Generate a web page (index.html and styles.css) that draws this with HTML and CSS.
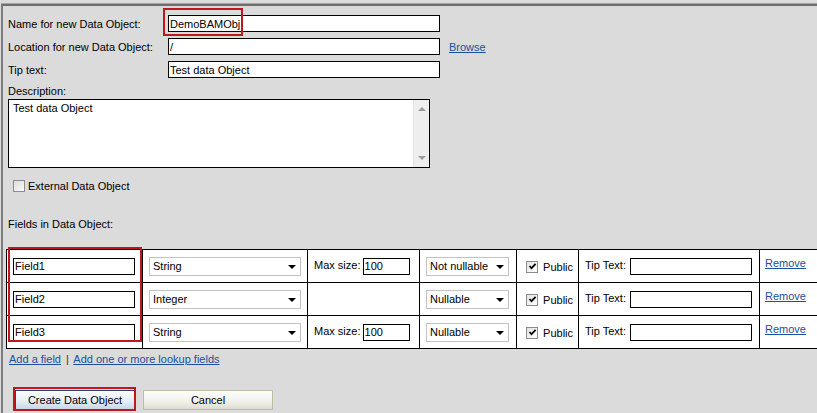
FILE: index.html
```html
<!DOCTYPE html>
<html lang="en">

<head>
  <meta charset="UTF-8">
  <meta name="viewport" content="width=device-width, initial-scale=1.0">
  <title>Create Data Object</title>
  <link rel="stylesheet" href="styles.css">
</head>

<body>
  <div class="panel">

    <!-- Basic properties -->
    <div class="props">
      <label class="label">Name for new Data Object:</label>
      <div class="field">
        <input type="text" class="text-input wide" value="DemoBAMObj">
        <span class="mark mark-name"></span>
      </div>
      <span></span>

      <label class="label">Location for new Data Object:</label>
      <div class="field">
        <input type="text" class="text-input wide" value="/">
      </div>
      <a href="#" class="link browse">Browse</a>

      <label class="label">Tip text:</label>
      <div class="field">
        <input type="text" class="text-input wide" value="Test data Object">
      </div>
      <span></span>
    </div>

    <div class="label desc-label">Description:</div>
    <div class="desc-box">
      <textarea class="desc-text">Test data Object</textarea>
      <div class="vscroll">
        <span class="arrow up"></span>
        <span class="arrow down"></span>
      </div>
    </div>

    <div class="external">
      <span class="check"></span>
      <span class="label">External Data Object</span>
    </div>

    <div class="label fields-label">Fields in Data Object:</div>

    <!-- Field rows -->
    <div class="fields-wrap">
      <table class="fields">
        <colgroup>
          <col class="w-name">
          <col class="w-type">
          <col class="w-size">
          <col class="w-null">
          <col class="w-public">
          <col class="w-tip">
          <col class="w-remove">
        </colgroup>
        <tbody>
          <tr>
            <td><input type="text" class="text-input name-input" value="Field1"></td>
            <td>
              <span class="select type-select"><select><option>String</option><option>Integer</option></select></span>
            </td>
            <td>Max size: <input type="text" class="text-input size-input" value="100"></td>
            <td>
              <span class="select null-select"><select><option>Not nullable</option><option>Nullable</option></select></span>
            </td>
            <td class="public">
              <span class="check checked"><svg width="9" height="9" viewBox="0 0 9 9"><path d="M1.5 4 L3.5 6.2 L7.6 1.8" fill="none" stroke="#000" stroke-width="1.7"/></svg></span>
              <span class="public-text">Public</span>
            </td>
            <td>Tip Text: <input type="text" class="text-input tip-input"></td>
            <td class="remove"><a href="#" class="link">Remove</a></td>
          </tr>
          <tr>
            <td><input type="text" class="text-input name-input" value="Field2"></td>
            <td>
              <span class="select type-select"><select><option>Integer</option><option>String</option></select></span>
            </td>
            <td></td>
            <td>
              <span class="select null-select"><select><option>Nullable</option><option>Not nullable</option></select></span>
            </td>
            <td class="public">
              <span class="check checked"><svg width="9" height="9" viewBox="0 0 9 9"><path d="M1.5 4 L3.5 6.2 L7.6 1.8" fill="none" stroke="#000" stroke-width="1.7"/></svg></span>
              <span class="public-text">Public</span>
            </td>
            <td>Tip Text: <input type="text" class="text-input tip-input"></td>
            <td class="remove"><a href="#" class="link">Remove</a></td>
          </tr>
          <tr>
            <td><input type="text" class="text-input name-input" value="Field3"></td>
            <td>
              <span class="select type-select"><select><option>String</option><option>Integer</option></select></span>
            </td>
            <td>Max size: <input type="text" class="text-input size-input" value="100"></td>
            <td>
              <span class="select null-select"><select><option>Nullable</option><option>Not nullable</option></select></span>
            </td>
            <td class="public">
              <span class="check checked"><svg width="9" height="9" viewBox="0 0 9 9"><path d="M1.5 4 L3.5 6.2 L7.6 1.8" fill="none" stroke="#000" stroke-width="1.7"/></svg></span>
              <span class="public-text">Public</span>
            </td>
            <td>Tip Text: <input type="text" class="text-input tip-input"></td>
            <td class="remove"><a href="#" class="link">Remove</a></td>
          </tr>
        </tbody>
      </table>
      <span class="mark mark-names"></span>
    </div>

    <div class="add-links">
      <a href="#" class="link">Add a field</a>
      <span class="sep">|</span>
      <a href="#" class="link">Add one or more lookup fields</a>
    </div>

    <div class="actions">
      <span class="btn-wrap">
        <button class="btn btn-primary">Create Data Object</button>
        <span class="mark mark-create"></span>
      </span>
      <button class="btn">Cancel</button>
    </div>

  </div>
</body>

</html>
```

FILE: styles.css
```css
/* General Reset */
* {
  margin: 0;
  padding: 0;
  box-sizing: border-box;
}

body {
  font-family: 'Liberation Sans', Arial, sans-serif;
  font-size: 11px;
  color: #000;
  background-color: #dbdbdb;
  padding-top: 4px;
  overflow: hidden;
}

/* Outer panel with the dark top and left edge */
.panel {
  margin-left: 1px;
  height: 420px;
  border-top: 2px solid #6e6e6e;
  border-left: 2px solid #7c7c7c;
  box-shadow: 0 -1px 0 #a4a4a4;
  padding-top: 9px;
}

.label {
  line-height: 14px;
}

.link {
  color: #1c4f9e;
  text-decoration: underline;
}

/* Red call-out boxes */
.mark {
  position: absolute;
  border: 2px solid #c0161e;
  pointer-events: none;
}

/* Text inputs */
.text-input {
  height: 17px;
  border: 1px solid #000;
  background-color: #fff;
  font-family: inherit;
  font-size: 11px;
  padding: 0 1px;
  vertical-align: middle;
}

/* Basic properties grid */
.props {
  display: grid;
  grid-template-columns: 160px 272px auto;
  row-gap: 6px;
  align-items: center;
  margin-left: 5px;
}

.field {
  position: relative;
  height: 17px;
}

.wide {
  width: 272px;
  display: block;
}

.mark-name {
  left: -5px;
  top: -7px;
  width: 80px;
  height: 28px;
}

.browse {
  margin-left: 9px;
}

/* Description */
.desc-label {
  margin: 6px 0 1px 5px;
}

.desc-box {
  display: flex;
  width: 422px;
  height: 69px;
  margin-left: 5px;
  border: 1px solid #000;
  background-color: #fff;
}

.desc-text {
  flex: 1;
  border: none;
  resize: none;
  outline: none;
  font-family: inherit;
  font-size: 11px;
  padding: 2px 4px;
}

.vscroll {
  width: 16px;
  background-color: #eeeeee;
  border-left: 1px solid #e2e2e2;
  display: flex;
  flex-direction: column;
  justify-content: space-between;
  align-items: center;
  padding: 7px 0 7px;
}

.arrow {
  width: 0;
  height: 0;
  border-left: 4px solid transparent;
  border-right: 4px solid transparent;
}

.arrow.up {
  border-bottom: 4px solid #9c9c9c;
}

.arrow.down {
  border-top: 4px solid #9c9c9c;
}

/* Checkboxes */
.check {
  display: inline-flex;
  align-items: center;
  justify-content: center;
  width: 12px;
  height: 12px;
  border: 1px solid #8c8c8c;
  background: linear-gradient(135deg, #dcdcdc, #fbfbfb);
  vertical-align: middle;
}

.checked {
  background: linear-gradient(135deg, #e4e4e4, #ffffff);
}

.external {
  display: flex;
  align-items: center;
  gap: 3px;
  margin: 11px 0 0 10px;
}

.fields-label {
  margin: 24px 0 0 5px;
}

/* Field table */
.fields-wrap {
  position: relative;
  margin: 18px 0 0 3px;
}

.fields {
  border-collapse: collapse;
  table-layout: fixed;
  width: 812px;
  background-color: #fff;
}

.fields td {
  border: 1px solid #000;
  height: 33px;
  padding: 0 6px;
  white-space: nowrap;
  vertical-align: middle;
}

.w-name { width: 136px; }
.w-type { width: 165px; }
.w-size { width: 112px; }
.w-null { width: 97px; }
.w-public { width: 62px; }
.w-tip { width: 181px; }
.w-remove { width: 59px; }

.name-input {
  width: 122px;
}

.size-input {
  width: 47px;
  margin-left: -1px;
}

.tip-input {
  width: 122px;
  margin-left: 1px;
}

.select {
  position: relative;
  display: inline-block;
  vertical-align: middle;
}

.select select {
  appearance: none;
  -webkit-appearance: none;
  height: 19px;
  border: 1px solid #c3c3c3;
  background-color: #fff;
  font-family: inherit;
  font-size: 11px;
  padding: 0 3px;
  display: block;
}

.select::after {
  content: "";
  position: absolute;
  right: 5px;
  top: 8px;
  border-left: 4px solid transparent;
  border-right: 4px solid transparent;
  border-top: 4px solid #000;
}

.type-select select {
  width: 152px;
}

.null-select select {
  width: 83px;
}

.fields td.public {
  padding-left: 9px;
}

.public-text {
  margin-left: 2px;
  position: relative;
  top: 2px;
}

.fields td.remove {
  vertical-align: top;
  padding: 7px 0 0 5px;
}

.mark-names {
  left: 2px;
  top: -2px;
  width: 134px;
  height: 95px;
}

/* Links below the table */
.add-links {
  margin: 3px 0 0 6px;
  line-height: 14px;
}

.sep {
  color: #333;
  margin: 0 2px;
}

/* Buttons */
.actions {
  display: flex;
  gap: 8px;
  margin: 24px 0 0 12px;
}

.btn-wrap {
  position: relative;
}

.btn {
  width: 130px;
  height: 20px;
  font-family: inherit;
  font-size: 11px;
  color: #000;
  border: 1px solid #bdbda4;
  background: linear-gradient(#fefefd, #f1f1ea 60%, #dcdcd0);
  cursor: pointer;
}

.btn-primary {
  width: 120px;
  border-color: #2c4270;
  background: linear-gradient(#fafcfe, #e6eef7 55%, #c7d6e8);
}

.mark-create {
  left: -2px;
  top: -3px;
  width: 123px;
  height: 24px;
}
```
